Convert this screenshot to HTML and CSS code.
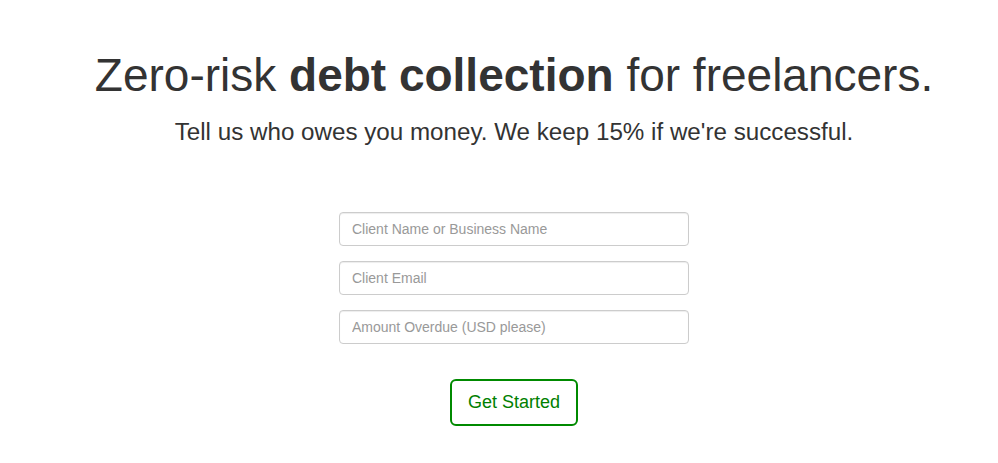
FILE: index.html
```html
<!DOCTYPE html>
<html>
<head>
<meta charset="utf-8">
<link rel="stylesheet" href="styles.css">
</head>
<body>
<main class="page">
  <h1 class="title">Zero-risk <strong>debt collection</strong> for freelancers.</h1>
  <p class="lead">Tell us who owes you money. We keep 15% if we're successful.</p>
  <form class="form">
    <input class="field" type="text" placeholder="Client Name or Business Name">
    <input class="field" type="email" placeholder="Client Email">
    <input class="field" type="text" placeholder="Amount Overdue (USD please)">
    <button class="btn" type="button">Get Started</button>
  </form>
</main>
</body>
</html>
```
FILE: styles.css
```css
html, body {
  margin: 0;
  padding: 0;
  background: #fff;
}
body {
  font-family: "Liberation Sans", Arial, Helvetica, sans-serif;
  color: #333;
}
.page {
  padding: 48px 0 0 30px;
  display: flex;
  flex-direction: column;
  align-items: center;
}
.title {
  margin: 0;
  font-size: 46px;
  font-weight: 400;
  line-height: 54px;
}
.title strong {
  font-weight: 700;
}
.lead {
  margin: 15px 0 0;
  font-size: 24.2px;
  line-height: 30px;
}
.form {
  margin-top: 65px;
  display: flex;
  flex-direction: column;
  align-items: center;
  gap: 15px;
}
.field {
  box-sizing: border-box;
  width: 350px;
  height: 34px;
  padding: 6px 12px;
  border: 1px solid #ccc;
  border-radius: 4px;
  font-family: inherit;
  font-size: 14px;
  color: #555;
  outline: none;
  box-shadow: inset 0 1px 1px rgba(0,0,0,0.075);
}
.field::placeholder {
  color: #999;
}
.btn {
  margin-top: 20px;
  box-sizing: border-box;
  width: 128px;
  height: 47px;
  border: 2px solid #008a00;
  border-radius: 6px;
  background: #fff;
  color: #008000;
  font-family: inherit;
  font-size: 18px;
  padding: 0;
}
```
